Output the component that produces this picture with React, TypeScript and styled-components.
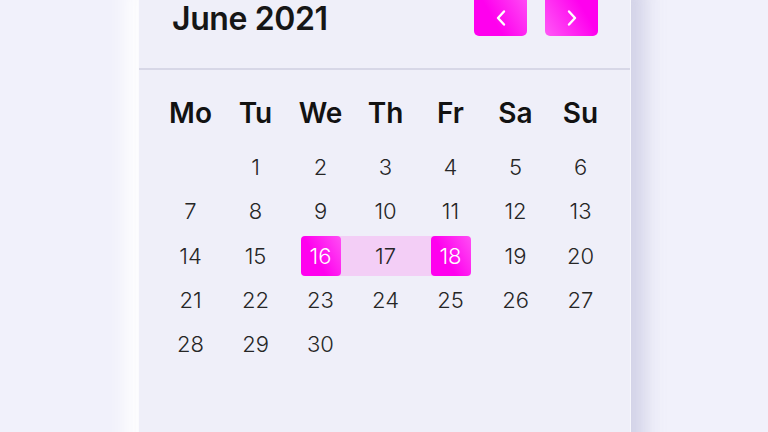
import React from 'react';
import styled, { createGlobalStyle } from 'styled-components';

const GlobalStyle = createGlobalStyle`
  html, body {
    margin: 0;
    padding: 0;
    background: #f1f1fb;
    font-family: Inter, "Noto Sans", "Liberation Sans", sans-serif;
    overflow: hidden;
  }
`;

const Page = styled.div`
  width: 768px;
  height: 432px;
  overflow: hidden;
`;

const Card = styled.div`
  width: 491px;
  height: 480px;
  margin: -16px 0 0 139px;
  background: #efeff9;
  box-shadow: 14px 0 18px rgba(160, 160, 200, 0.38), -14px 0 18px rgba(255, 255, 255, 0.9);
  border-right: 1px solid #f7f7fd;
`;

const Header = styled.div`
  display: flex;
  align-items: flex-start;
  justify-content: space-between;
  height: 86px;
  padding: 0 32px 0 33px;
  border-bottom: 2px solid #d7d7e7;
  box-sizing: border-box;
`;

const Title = styled.h1`
  margin: 18px 0 0;
  font-size: 32px;
  line-height: 34px;
  font-weight: 600;
  letter-spacing: -0.4px;
  color: #161616;
`;

const NavGroup = styled.div`
  display: flex;
  gap: 18px;
`;

const NavButton = styled.button<{ $dir: 'prev' | 'next' }>`
  width: 53px;
  height: 52px;
  padding: 16px 0 0;
  border: none;
  border-radius: 5px;
  display: flex;
  align-items: center;
  justify-content: center;
  background: ${(p) =>
    p.$dir === 'prev'
      ? 'linear-gradient(60deg, #ff00ee 35%, #ff5af6 100%)'
      : 'linear-gradient(60deg, #ff5af6 0%, #ff00ee 65%)'};
  cursor: pointer;
`;

const Body = styled.div`
  padding: 11px 17px 0 19px;
`;

const Grid = styled.div`
  display: grid;
  grid-template-columns: repeat(7, 65px);
  grid-template-rows: 64px;
  grid-auto-rows: 44.3px;
`;

const WeekDay = styled.div`
  display: flex;
  align-items: center;
  justify-content: center;
  font-size: 28px;
  font-weight: 600;
  color: #121212;
`;

type Span = 'none' | 'start' | 'mid' | 'end';

const band = '#f3cef6';

const Cell = styled.div<{ $span: Span }>`
  display: flex;
  align-items: center;
  justify-content: center;
  background-image: ${(p) =>
    p.$span === 'mid'
      ? `linear-gradient(${band}, ${band})`
      : p.$span === 'start'
      ? `linear-gradient(90deg, transparent 50%, ${band} 50%)`
      : p.$span === 'end'
      ? `linear-gradient(90deg, ${band} 50%, transparent 50%)`
      : 'none'};
  background-size: 100% 40px;
  background-position: center;
  background-repeat: no-repeat;
`;

const DayNum = styled.span<{ $picked: boolean }>`
  width: 40px;
  height: 40px;
  border-radius: 4px;
  display: flex;
  align-items: center;
  justify-content: center;
  font-size: 22px;
  font-weight: 300;
  color: ${(p) => (p.$picked ? '#ffffff' : '#262626')};
  background: ${(p) =>
    p.$picked ? 'linear-gradient(60deg, #ff00ee 40%, #ff4ff4 100%)' : 'transparent'};
`;

const Chevron = ({ dir }: { dir: 'prev' | 'next' }) => (
  <svg width="14" height="18" viewBox="0 0 14 18" fill="none">
    <path
      d={dir === 'prev' ? 'M10 2.5 L4 9 L10 15.5' : 'M4 2.5 L10 9 L4 15.5'}
      stroke="#ffffff"
      strokeWidth="2.4"
      strokeLinecap="round"
      strokeLinejoin="round"
    />
  </svg>
);

const weekDays = ['Mo', 'Tu', 'We', 'Th', 'Fr', 'Sa', 'Su'];
const rangeStart = 16;
const rangeEnd = 18;

function spanFor(day: number): Span {
  if (day === rangeStart) return 'start';
  if (day === rangeEnd) return 'end';
  if (day > rangeStart && day < rangeEnd) return 'mid';
  return 'none';
}

export default function App() {
  // June 2021 starts on a Tuesday
  const cells: (number | null)[] = [null];
  for (let d = 1; d <= 30; d++) cells.push(d);

  return (
    <Page>
      <GlobalStyle />
      <Card>
        <Header>
          <Title>June 2021</Title>
          <NavGroup>
            <NavButton $dir="prev" aria-label="Previous month">
              <Chevron dir="prev" />
            </NavButton>
            <NavButton $dir="next" aria-label="Next month">
              <Chevron dir="next" />
            </NavButton>
          </NavGroup>
        </Header>
        <Body>
          <Grid>
            {weekDays.map((w) => (
              <WeekDay key={w}>{w}</WeekDay>
            ))}
            {cells.map((d, i) =>
              d === null ? (
                <Cell key={`e${i}`} $span="none" />
              ) : (
                <Cell key={d} $span={spanFor(d)}>
                  <DayNum $picked={d === rangeStart || d === rangeEnd}>{d}</DayNum>
                </Cell>
              )
            )}
          </Grid>
        </Body>
      </Card>
    </Page>
  );
}
